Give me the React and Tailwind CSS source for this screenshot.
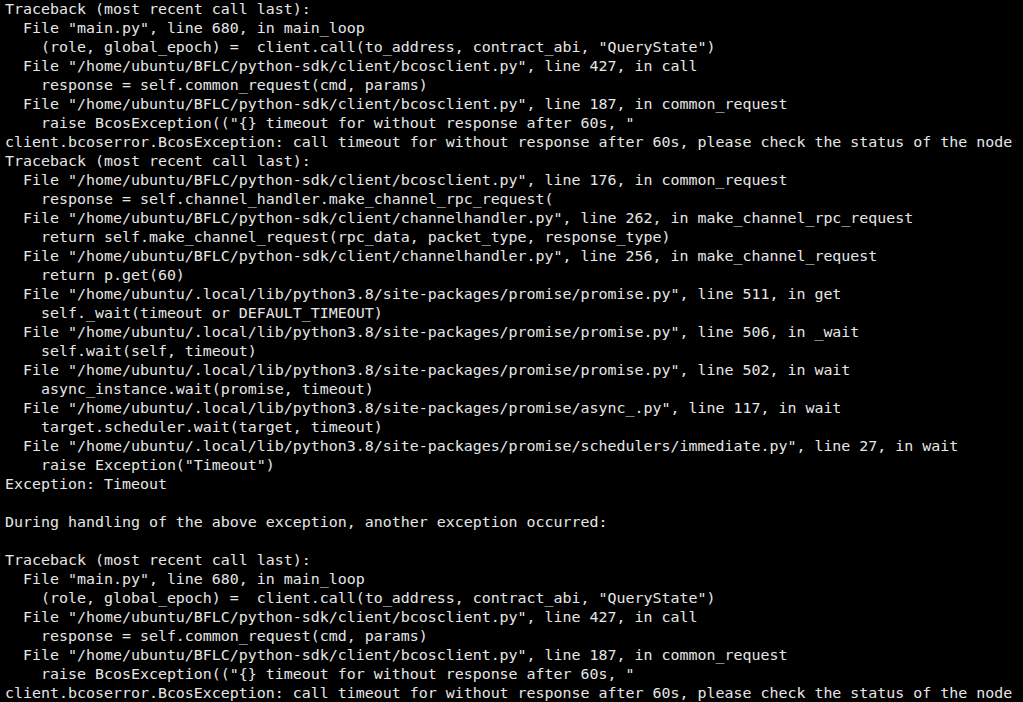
const LINES = [
  'Traceback (most recent call last):',
  '  File "main.py", line 680, in main_loop',
  '    (role, global_epoch) =  client.call(to_address, contract_abi, "QueryState")',
  '  File "/home/ubuntu/BFLC/python-sdk/client/bcosclient.py", line 427, in call',
  '    response = self.common_request(cmd, params)',
  '  File "/home/ubuntu/BFLC/python-sdk/client/bcosclient.py", line 187, in common_request',
  '    raise BcosException(("{} timeout for without response after 60s, "',
  'client.bcoserror.BcosException: call timeout for without response after 60s, please check the status of the node',
  'Traceback (most recent call last):',
  '  File "/home/ubuntu/BFLC/python-sdk/client/bcosclient.py", line 176, in common_request',
  '    response = self.channel_handler.make_channel_rpc_request(',
  '  File "/home/ubuntu/BFLC/python-sdk/client/channelhandler.py", line 262, in make_channel_rpc_request',
  '    return self.make_channel_request(rpc_data, packet_type, response_type)',
  '  File "/home/ubuntu/BFLC/python-sdk/client/channelhandler.py", line 256, in make_channel_request',
  '    return p.get(60)',
  '  File "/home/ubuntu/.local/lib/python3.8/site-packages/promise/promise.py", line 511, in get',
  '    self._wait(timeout or DEFAULT_TIMEOUT)',
  '  File "/home/ubuntu/.local/lib/python3.8/site-packages/promise/promise.py", line 506, in _wait',
  '    self.wait(self, timeout)',
  '  File "/home/ubuntu/.local/lib/python3.8/site-packages/promise/promise.py", line 502, in wait',
  '    async_instance.wait(promise, timeout)',
  '  File "/home/ubuntu/.local/lib/python3.8/site-packages/promise/async_.py", line 117, in wait',
  '    target.scheduler.wait(target, timeout)',
  '  File "/home/ubuntu/.local/lib/python3.8/site-packages/promise/schedulers/immediate.py", line 27, in wait',
  '    raise Exception("Timeout")',
  'Exception: Timeout',
  '',
  'During handling of the above exception, another exception occurred:',
  '',
  'Traceback (most recent call last):',
  '  File "main.py", line 680, in main_loop',
  '    (role, global_epoch) =  client.call(to_address, contract_abi, "QueryState")',
  '  File "/home/ubuntu/BFLC/python-sdk/client/bcosclient.py", line 427, in call',
  '    response = self.common_request(cmd, params)',
  '  File "/home/ubuntu/BFLC/python-sdk/client/bcosclient.py", line 187, in common_request',
  '    raise BcosException(("{} timeout for without response after 60s, "',
  'client.bcoserror.BcosException: call timeout for without response after 60s, please check the status of the node',
]

export default function App() {
  return (
    <div className="h-[702px] w-full overflow-hidden bg-black pl-[5px] font-['DejaVu_Sans_Mono',monospace] text-[14.95px] leading-[19px] text-[#e6e6e6]">
      {LINES.map((line, i) => (
        <div key={i} className="h-[19px] whitespace-pre">
          {line}
        </div>
      ))}
    </div>
  )
}
